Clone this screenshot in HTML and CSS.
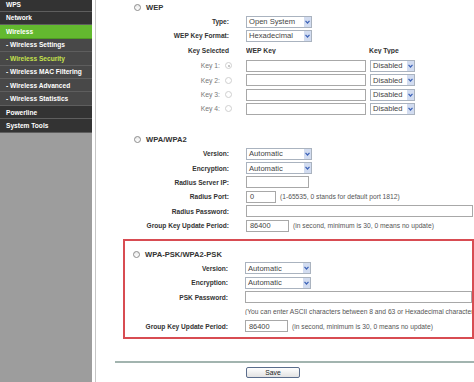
FILE: index.html
```html
<!DOCTYPE html>
<html lang="en">
<head>
    <meta charset="UTF-8">
    <meta name="viewport" content="width=device-width, initial-scale=1.0">
    <title>Wireless Security</title>
    <link rel="stylesheet" href="styles.css">
</head>
<body>
    <div class="page">
        <nav class="menu">
            <div class="menu-list">
                <a class="item">WPS</a>
                <a class="item">Network</a>
                <a class="item open">Wireless</a>
                <a class="item sub">- Wireless Settings</a>
                <a class="item sub current">- Wireless Security</a>
                <a class="item sub">- Wireless MAC Filtering</a>
                <a class="item sub">- Wireless Advanced</a>
                <a class="item sub">- Wireless Statistics</a>
                <a class="item">Powerline</a>
                <a class="item">System Tools</a>
            </div>
        </nav>

        <main class="content">
            <!-- WEP -->
            <section class="group">
                <div class="title"><span class="radio"></span>WEP</div>
                <div class="row">
                    <span class="label">Type:</span>
                    <div class="field">
                        <div class="select w66"><span>Open System</span><span class="arrow"><svg width="5" height="4" viewBox="0 0 5 4"><path d="M0.5 0.8 L2.5 3 L4.5 0.8" fill="none" stroke="#3d63b8" stroke-width="1.2"/></svg></span></div>
                    </div>
                </div>
                <div class="row">
                    <span class="label">WEP Key Format:</span>
                    <div class="field">
                        <div class="select w66"><span>Hexadecimal</span><span class="arrow"><svg width="5" height="4" viewBox="0 0 5 4"><path d="M0.5 0.8 L2.5 3 L4.5 0.8" fill="none" stroke="#3d63b8" stroke-width="1.2"/></svg></span></div>
                    </div>
                </div>
                <div class="row head">
                    <span class="label">Key Selected</span>
                    <div class="field">
                        <span class="col-key">WEP Key</span>
                        <span>Key Type</span>
                    </div>
                </div>
                <div class="row">
                    <span class="label key">Key 1: <span class="radio small checked"></span></span>
                    <div class="field">
                        <div class="input w120"></div>
                        <div class="select w45"><span>Disabled</span><span class="arrow"><svg width="5" height="4" viewBox="0 0 5 4"><path d="M0.5 0.8 L2.5 3 L4.5 0.8" fill="none" stroke="#3d63b8" stroke-width="1.2"/></svg></span></div>
                    </div>
                </div>
                <div class="row">
                    <span class="label key">Key 2: <span class="radio small"></span></span>
                    <div class="field">
                        <div class="input w120"></div>
                        <div class="select w45"><span>Disabled</span><span class="arrow"><svg width="5" height="4" viewBox="0 0 5 4"><path d="M0.5 0.8 L2.5 3 L4.5 0.8" fill="none" stroke="#3d63b8" stroke-width="1.2"/></svg></span></div>
                    </div>
                </div>
                <div class="row">
                    <span class="label key">Key 3: <span class="radio small"></span></span>
                    <div class="field">
                        <div class="input w120"></div>
                        <div class="select w45"><span>Disabled</span><span class="arrow"><svg width="5" height="4" viewBox="0 0 5 4"><path d="M0.5 0.8 L2.5 3 L4.5 0.8" fill="none" stroke="#3d63b8" stroke-width="1.2"/></svg></span></div>
                    </div>
                </div>
                <div class="row">
                    <span class="label key">Key 4: <span class="radio small"></span></span>
                    <div class="field">
                        <div class="input w120"></div>
                        <div class="select w45"><span>Disabled</span><span class="arrow"><svg width="5" height="4" viewBox="0 0 5 4"><path d="M0.5 0.8 L2.5 3 L4.5 0.8" fill="none" stroke="#3d63b8" stroke-width="1.2"/></svg></span></div>
                    </div>
                </div>
            </section>

            <!-- WPA/WPA2 -->
            <section class="group wpa">
                <div class="title"><span class="radio"></span>WPA/WPA2</div>
                <div class="row">
                    <span class="label">Version:</span>
                    <div class="field">
                        <div class="select w66"><span>Automatic</span><span class="arrow"><svg width="5" height="4" viewBox="0 0 5 4"><path d="M0.5 0.8 L2.5 3 L4.5 0.8" fill="none" stroke="#3d63b8" stroke-width="1.2"/></svg></span></div>
                    </div>
                </div>
                <div class="row">
                    <span class="label">Encryption:</span>
                    <div class="field">
                        <div class="select w66"><span>Automatic</span><span class="arrow"><svg width="5" height="4" viewBox="0 0 5 4"><path d="M0.5 0.8 L2.5 3 L4.5 0.8" fill="none" stroke="#3d63b8" stroke-width="1.2"/></svg></span></div>
                    </div>
                </div>
                <div class="row">
                    <span class="label">Radius Server IP:</span>
                    <div class="field"><div class="input w63"></div></div>
                </div>
                <div class="row">
                    <span class="label">Radius Port:</span>
                    <div class="field">
                        <div class="input w30">0</div>
                        <span class="hint">(1-65535, 0 stands for default port 1812)</span>
                    </div>
                </div>
                <div class="row">
                    <span class="label">Radius Password:</span>
                    <div class="field"><div class="input w227"></div></div>
                </div>
                <div class="row">
                    <span class="label">Group Key Update Period:</span>
                    <div class="field">
                        <div class="input w43">86400</div>
                        <span class="hint">(in second, minimum is 30, 0 means no update)</span>
                    </div>
                </div>
            </section>

            <!-- WPA-PSK/WPA2-PSK -->
            <section class="group psk">
                <div class="title"><span class="radio"></span>WPA-PSK/WPA2-PSK</div>
                <div class="row">
                    <span class="label">Version:</span>
                    <div class="field">
                        <div class="select w66"><span>Automatic</span><span class="arrow"><svg width="5" height="4" viewBox="0 0 5 4"><path d="M0.5 0.8 L2.5 3 L4.5 0.8" fill="none" stroke="#3d63b8" stroke-width="1.2"/></svg></span></div>
                    </div>
                </div>
                <div class="row">
                    <span class="label">Encryption:</span>
                    <div class="field">
                        <div class="select w66"><span>Automatic</span><span class="arrow"><svg width="5" height="4" viewBox="0 0 5 4"><path d="M0.5 0.8 L2.5 3 L4.5 0.8" fill="none" stroke="#3d63b8" stroke-width="1.2"/></svg></span></div>
                    </div>
                </div>
                <div class="row">
                    <span class="label">PSK Password:</span>
                    <div class="field"><div class="input w227"></div></div>
                </div>
                <div class="row">
                    <span class="label"></span>
                    <div class="field"><span class="hint">(You can enter ASCII characters between 8 and 63 or Hexadecimal characters between 8 and 64.)</span></div>
                </div>
                <div class="row">
                    <span class="label">Group Key Update Period:</span>
                    <div class="field">
                        <div class="input w43">86400</div>
                        <span class="hint">(in second, minimum is 30, 0 means no update)</span>
                    </div>
                </div>
            </section>

            <div class="footer">
                <button class="save">Save</button>
            </div>
        </main>
    </div>
</body>
</html>
```

FILE: styles.css
```css
* {
    box-sizing: border-box;
}

html, body {
    margin: 0;
    height: 100%;
    background-color: #fff;
}

body {
    font-family: "Liberation Sans", Arial, sans-serif;
    overflow: hidden;
}

.page {
    display: flex;
    height: 382px;
}

/* Left menu */
.menu {
    width: 92px;
    flex-shrink: 0;
    background-color: #9d9d9d;
}

.menu-list {
    margin-top: -1.7px;
}

.menu .item {
    display: flex;
    align-items: center;
    height: 13.44px;
    padding-left: 6px;
    background-color: #333;
    border-bottom: 1px solid #5e5e5e;
    color: #fff;
    font-size: 6.6px;
    font-weight: bold;
    white-space: nowrap;
    text-decoration: none;
}

.menu .item.sub {
    background-color: #484848;
}

.menu .item.open {
    background-color: #63b92f;
    border-bottom-color: #4f9a24;
}

.menu .item.current {
    color: #c6e24c;
}

/* Main content */
.content {
    flex: 1;
    min-width: 0;
    margin-left: 3px;
    border-left: 1px solid #c6c6c6;
    overflow: hidden;
}

.title {
    display: flex;
    align-items: center;
    height: 14.4px;
    padding-left: 38px;
    font-size: 7.6px;
    font-weight: bold;
    color: #333;
}

.radio {
    display: inline-block;
    width: 7px;
    height: 7px;
    margin-right: 5px;
    border: 1px solid #8c8c8c;
    border-radius: 50%;
    background: linear-gradient(#e9e9e9, #fff);
}

.radio.small {
    margin: 0 -3px 0 5px;
    border-color: #cfcfcf;
    background: #fff;
    position: relative;
}

.radio.small.checked:after {
    content: "";
    position: absolute;
    left: 1.5px;
    top: 1.5px;
    width: 2px;
    height: 2px;
    border-radius: 50%;
    background-color: #b5b5b5;
}

.row {
    display: grid;
    grid-template-columns: 133px 1fr;
    column-gap: 17px;
    align-items: center;
    height: 14.4px;
}

.row.head {
    height: 15.4px;
}

.label {
    text-align: right;
    font-size: 6.6px;
    font-weight: bold;
    color: #333;
    white-space: nowrap;
}

.label.key {
    display: flex;
    align-items: center;
    justify-content: flex-end;
    font-size: 6.8px;
    font-weight: normal;
    color: #777;
}

.field {
    display: flex;
    align-items: center;
    gap: 4px;
    white-space: nowrap;
    min-width: 0;
    overflow: hidden;
}

.head .field {
    gap: 0;
    font-size: 6.8px;
    font-weight: bold;
    color: #333;
}

.col-key {
    width: 123px;
}

.select {
    display: flex;
    align-items: center;
    flex-shrink: 0;
    height: 12px;
    padding-left: 2px;
    border: 1px solid #aab3bf;
    background-color: #fff;
    font-size: 7.6px;
    color: #444;
    overflow: hidden;
}

.select .arrow {
    display: flex;
    align-items: center;
    justify-content: center;
    width: 7px;
    height: 10px;
    margin-left: auto;
    background-color: #d2dcf0;
}

.input {
    display: flex;
    align-items: center;
    flex-shrink: 0;
    height: 12px;
    padding-left: 3px;
    border: 1px solid #a8a8a8;
    background-color: #fff;
    font-size: 7.4px;
    color: #444;
}

.w30 { width: 30px; }
.w43 { width: 43px; }
.w45 { width: 45px; }
.w63 { width: 63px; }
.w66 { width: 66px; }
.w120 { width: 120px; }
.w227 { width: 227px; }

.hint {
    font-size: 6.7px;
    color: #555;
}

.wpa {
    margin-top: 16px;
}

/* Highlighted PSK block */
.psk {
    margin: 6px 0 0 27px;
    padding: 6px 0 4px;
    border: 2px solid #d84c52;
}

.psk .title {
    padding-left: 8px;
}

.psk .row {
    grid-template-columns: 103px 1fr;
}

.footer {
    margin: 22px 0 0 19px;
    padding: 4px 0 0 131px;
    border-top: 2px solid #a2b4af;
}

.save {
    display: block;
    width: 54px;
    height: 11px;
    padding: 0;
    border: 1px solid #5b6d8c;
    border-radius: 2px;
    background: linear-gradient(#fff, #e2e2e2);
    font-family: "Liberation Sans", Arial, sans-serif;
    font-size: 6.8px;
    color: #222;
}
```
